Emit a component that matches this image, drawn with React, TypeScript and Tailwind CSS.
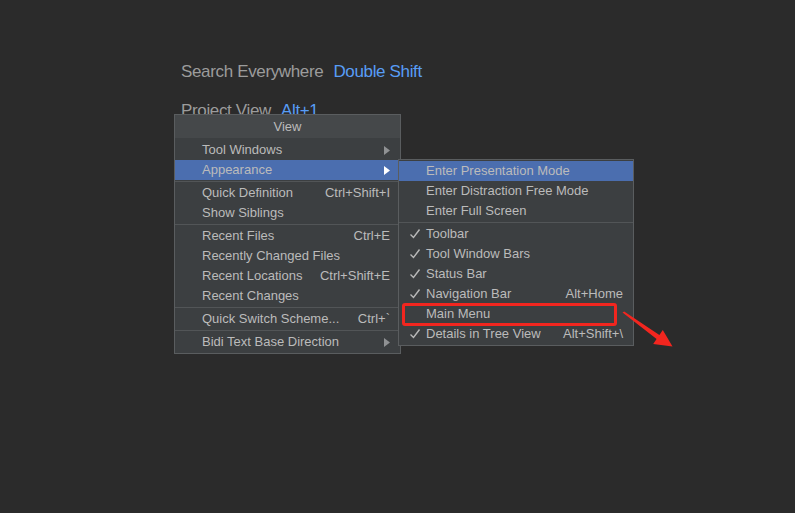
import React from "react"

type Item =
  | { kind: "sep" }
  | {
      kind?: "item"
      label: string
      shortcut?: string
      submenu?: boolean
      checked?: boolean
      selected?: boolean
    }

const viewItems: Item[] = [
  { label: "Tool Windows", submenu: true },
  { label: "Appearance", submenu: true, selected: true },
  { kind: "sep" },
  { label: "Quick Definition", shortcut: "Ctrl+Shift+I" },
  { label: "Show Siblings" },
  { kind: "sep" },
  { label: "Recent Files", shortcut: "Ctrl+E" },
  { label: "Recently Changed Files" },
  { label: "Recent Locations", shortcut: "Ctrl+Shift+E" },
  { label: "Recent Changes" },
  { kind: "sep" },
  { label: "Quick Switch Scheme...", shortcut: "Ctrl+`" },
  { kind: "sep" },
  { label: "Bidi Text Base Direction", submenu: true },
]

const appearanceItems: Item[] = [
  { label: "Enter Presentation Mode", selected: true },
  { label: "Enter Distraction Free Mode" },
  { label: "Enter Full Screen" },
  { kind: "sep" },
  { label: "Toolbar", checked: true },
  { label: "Tool Window Bars", checked: true },
  { label: "Status Bar", checked: true },
  { label: "Navigation Bar", shortcut: "Alt+Home", checked: true },
  { label: "Main Menu" },
  { label: "Details in Tree View", shortcut: "Alt+Shift+\\", checked: true },
]

function Tick() {
  return (
    <svg width="12" height="12" viewBox="0 0 12 12" className="absolute left-[10px] top-[4px]">
      <path d="M1.5 6.5 L4.5 9.5 L10.5 1.5" fill="none" stroke="#b9b9b9" strokeWidth="1.4" />
    </svg>
  )
}

function Arrow({ white }: { white?: boolean }) {
  return (
    <svg width="6" height="9" viewBox="0 0 6 9" className="ml-auto">
      <path d="M0 0 L6 4.5 L0 9 Z" fill={white ? "#ffffff" : "#8f9193"} />
    </svg>
  )
}

function Rows({ items, top }: { items: Item[]; top: string }) {
  return (
    <div className={`pb-[1px] ${top}`}>
      {items.map((it, i) => {
        if (it.kind === "sep") {
          return (
            <div key={i} className="flex h-[3px] items-center">
              <div className="h-px w-full bg-[#525557]" />
            </div>
          )
        }
        return (
          <div
            key={i}
            className={`relative flex h-[20px] items-center pl-[27px] pr-[10px] ${
              it.selected ? "bg-[#4b6eaf]" : ""
            }`}
          >
            {it.checked && <Tick />}
            <span>{it.label}</span>
            {it.shortcut && <span className="ml-auto pl-4">{it.shortcut}</span>}
            {it.submenu && <Arrow white={it.selected} />}
          </div>
        )
      })}
    </div>
  )
}

export default function App() {
  return (
    <div
      className="relative h-[513px] w-[795px] overflow-hidden bg-[#2b2b2b] text-[13px] text-[#bbbbbb]"
      style={{ fontFamily: '"Liberation Sans", Arial, "Noto Sans CJK SC", sans-serif' }}
    >
      <div className="flex flex-col gap-[19px] pl-[181px] pt-[62px] text-[17px] leading-[20px] tracking-[-0.35px] text-[#9c9c9c]">
        <div className="flex gap-[10px]">
          <span>Search Everywhere</span>
          <span className="text-[#589df6]">Double Shift</span>
        </div>
        <div className="flex gap-[10px]">
          <span>Project View</span>
          <span className="text-[#589df6]">Alt+1</span>
        </div>
      </div>

      {/* View popup */}
      <div className="absolute left-[174px] top-[114px] w-[227px] border border-[#5a5d5f] bg-[#3c3f41]">
        <div className="flex h-[23px] items-center justify-center bg-[#45484a]">View</div>
        <Rows items={viewItems} top="pt-[2px]" />
      </div>

      {/* Appearance submenu */}
      <div className="absolute left-[398px] top-[159px] w-[236px] border border-[#5a5d5f] bg-[#3c3f41]">
        <Rows items={appearanceItems} top="pt-[1px]" />
      </div>

      {/* highlight box */}
      <div className="absolute left-[402px] top-[303px] h-[23px] w-[215px] rounded-[3px] border-[3px] border-[#f2261f]" />

      <svg className="pointer-events-none absolute left-0 top-0" width="795" height="513">
        <polygon
          points="622.5,312.5 656.6,339.1 653.2,344 672.5,346.5 662.8,330 659.4,334.9 624.2,311.5"
          fill="#f2261f"
        />
      </svg>
    </div>
  )
}
